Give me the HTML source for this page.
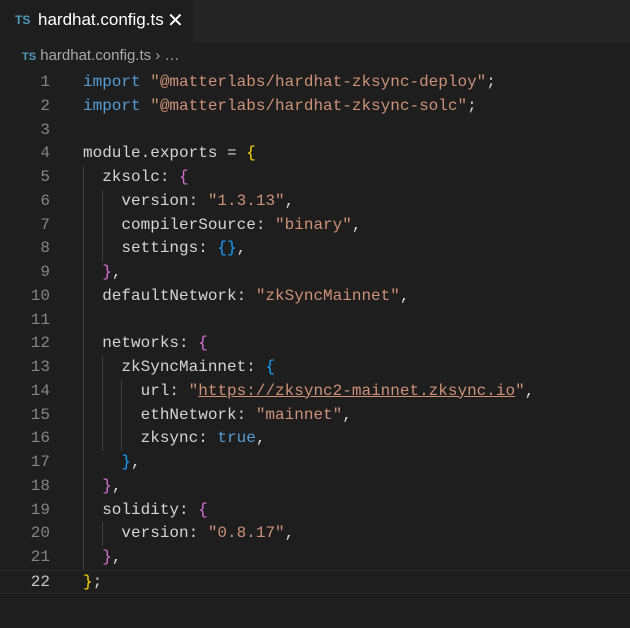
<!DOCTYPE html>
<html><head><meta charset="utf-8"><style>
body{margin:0;width:630px;height:628px;background:#1e1e1e;overflow:hidden;font-family:"Liberation Sans",sans-serif}
.tabs{position:absolute;left:0;top:0;width:630px;height:42px;background:#252526}
.tab{position:absolute;left:0;top:0;width:193px;height:42px;background:#1e1e1e;color:#fff;font-size:17px}
.ts{color:#519aba;font-weight:bold;font-size:12px;font-family:"Liberation Sans",sans-serif}
.bc{position:absolute;left:22px;top:47px;color:#a9a9a9;font-size:15px}
.code{position:absolute;left:0;top:71px;width:630px;font-family:"Liberation Mono",monospace;font-size:16px}
.l{position:relative;height:23.75px;line-height:23.75px;white-space:pre;color:#d4d4d4}
.n{position:absolute;left:0;width:50px;text-align:right;color:#858585}
.t{position:absolute;left:83px}
.cur{border-top:1px solid #282828;border-bottom:1px solid #282828;box-sizing:border-box}
.cur .n{color:#c6c6c6}
.k{color:#569cd6}.s{color:#ce9178}.y{color:#ffd700}.p{color:#da70d6}.b{color:#179fff}.u{text-decoration:underline}
.g{position:absolute;width:1px;background:#404040}
</style></head><body>
<div class="tabs"><div class="tab"><span class="ts" style="position:absolute;left:15px;top:13px">TS</span><span style="position:absolute;left:38px;top:10px">hardhat.config.ts</span><span style="position:absolute;left:167px;top:8px;font-size:20px">✕</span></div></div>
<div class="bc"><span class="ts" style="font-size:11px">TS</span> hardhat.config.ts › …</div>
<div class="g" style="left:83px;top:166px;height:404px"></div>
<div class="g" style="left:102px;top:190px;height:71px"></div>
<div class="g" style="left:102px;top:356px;height:95px"></div>
<div class="g" style="left:121px;top:380px;height:71px"></div>
<div class="g" style="left:102px;top:522px;height:24px"></div>
<div class="code">
<div class="l"><span class="n">1</span><span class="t"><span class="k">import</span> <span class="s">"@matterlabs/hardhat-zksync-deploy"</span>;</span></div>
<div class="l"><span class="n">2</span><span class="t"><span class="k">import</span> <span class="s">"@matterlabs/hardhat-zksync-solc"</span>;</span></div>
<div class="l"><span class="n">3</span></div>
<div class="l"><span class="n">4</span><span class="t">module.exports = <span class="y">{</span></span></div>
<div class="l"><span class="n">5</span><span class="t">  zksolc: <span class="p">{</span></span></div>
<div class="l"><span class="n">6</span><span class="t">    version: <span class="s">"1.3.13"</span>,</span></div>
<div class="l"><span class="n">7</span><span class="t">    compilerSource: <span class="s">"binary"</span>,</span></div>
<div class="l"><span class="n">8</span><span class="t">    settings: <span class="b">{}</span>,</span></div>
<div class="l"><span class="n">9</span><span class="t">  <span class="p">}</span>,</span></div>
<div class="l"><span class="n">10</span><span class="t">  defaultNetwork: <span class="s">"zkSyncMainnet"</span>,</span></div>
<div class="l"><span class="n">11</span></div>
<div class="l"><span class="n">12</span><span class="t">  networks: <span class="p">{</span></span></div>
<div class="l"><span class="n">13</span><span class="t">    zkSyncMainnet: <span class="b">{</span></span></div>
<div class="l"><span class="n">14</span><span class="t">      url: <span class="s">"<span class="u">https://zksync2-mainnet.zksync.io</span>"</span>,</span></div>
<div class="l"><span class="n">15</span><span class="t">      ethNetwork: <span class="s">"mainnet"</span>,</span></div>
<div class="l"><span class="n">16</span><span class="t">      zksync: <span class="k">true</span>,</span></div>
<div class="l"><span class="n">17</span><span class="t">    <span class="b">}</span>,</span></div>
<div class="l"><span class="n">18</span><span class="t">  <span class="p">}</span>,</span></div>
<div class="l"><span class="n">19</span><span class="t">  solidity: <span class="p">{</span></span></div>
<div class="l"><span class="n">20</span><span class="t">    version: <span class="s">"0.8.17"</span>,</span></div>
<div class="l"><span class="n">21</span><span class="t">  <span class="p">}</span>,</span></div>
<div class="l cur"><span class="n">22</span><span class="t"><span class="y">}</span>;</span></div>
</div>
</body></html>
